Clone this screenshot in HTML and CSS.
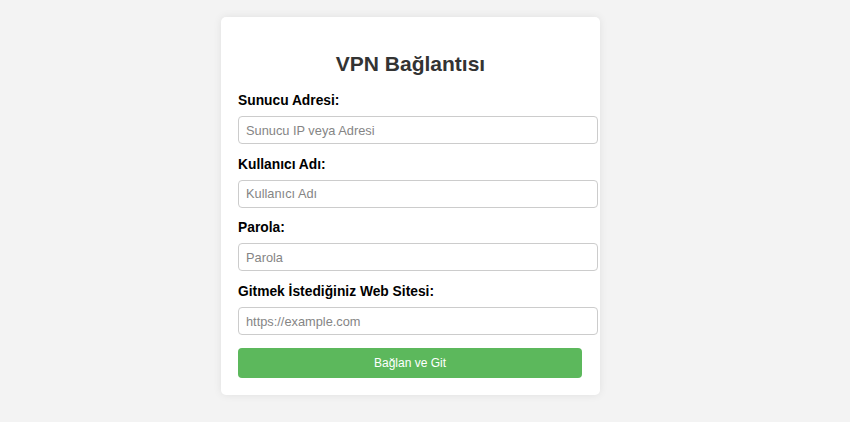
FILE: index.html
```html
<!DOCTYPE html>
<html lang="tr">
<head>
<meta charset="utf-8">
<title>VPN Bağlantısı</title>
<link rel="stylesheet" href="styles.css">
</head>
<body>
<div class="card">
  <h2 class="title">VPN Bağlantısı</h2>
  <form class="form">
    <label class="label" for="server">Sunucu Adresi:</label>
    <input class="input" id="server" type="text" placeholder="Sunucu IP veya Adresi">
    <label class="label" for="user">Kullanıcı Adı:</label>
    <input class="input" id="user" type="text" placeholder="Kullanıcı Adı">
    <label class="label" for="pass">Parola:</label>
    <input class="input" id="pass" type="password" placeholder="Parola">
    <label class="label" for="site">Gitmek İstediğiniz Web Sitesi:</label>
    <input class="input" id="site" type="text" placeholder="https://example.com">
    <button class="button" type="button">Bağlan ve Git</button>
  </form>
</div>
</body>
</html>
```
FILE: styles.css
```css
html, body {
  margin: 0;
  padding: 0;
}
body {
  background: #f3f3f3;
  font-family: "Liberation Sans", Arial, sans-serif;
  padding-top: 17px;
  height: 422px;
  box-sizing: border-box;
  overflow: hidden;
}
.card {
  margin-left: 221px;
  width: 345px;
  padding: 17px;
  background: #fff;
  border-radius: 5px;
  box-shadow: 0 0 8px rgba(0, 0, 0, 0.08);
}
.title {
  margin: 17px 0 17px;
  font-size: 21px;
  line-height: 25px;
  font-weight: bold;
  color: #333;
  text-align: center;
}
.form {
  margin: 0;
}
.label {
  display: block;
  font-size: 13.8px;
  line-height: 16px;
  font-weight: bold;
  color: #000;
  margin-bottom: 7px;
}
.input {
  display: block;
  width: 360px;
  height: 28px;
  box-sizing: border-box;
  padding: 0 7px;
  margin: 0 0 12.7px;
  border: 1px solid #ccc;
  border-radius: 4px;
  font-family: "Liberation Sans", Arial, sans-serif;
  font-size: 12.8px;
  color: #333;
  background: #fff;
}
.input::placeholder {
  color: #858585;
}
.button {
  display: block;
  width: 344px;
  height: 30px;
  border: none;
  border-radius: 4px;
  background: #5cb85c;
  color: #fff;
  font-family: "Liberation Sans", Arial, sans-serif;
  font-size: 12px;
  padding: 0;
  cursor: pointer;
}
```
